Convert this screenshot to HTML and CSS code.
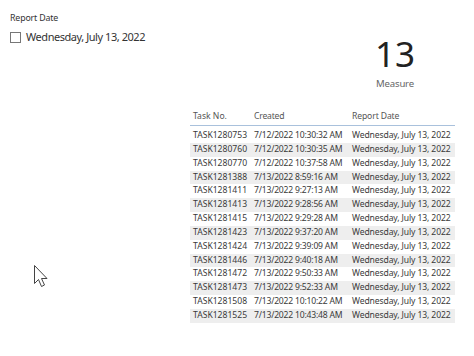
FILE: index.html
```html
<!DOCTYPE html>
<html>
<head>
<meta charset="utf-8">
<link rel="stylesheet" href="styles.css">
</head>
<body>
<div class="page">
  <div class="slicer">
    <div class="slicer-title">Report Date</div>
    <div class="slicer-item"><span class="checkbox"></span><span class="slicer-text">Wednesday, July 13, 2022</span></div>
  </div>
  <div class="right">
    <div class="card">
      <div class="card-value">13</div>
      <div class="card-label">Measure</div>
    </div>
    <div class="table">
      <div class="row head"><span class="c1">Task No.</span><span class="c2">Created</span><span class="c3">Report Date</span></div>
      <div class="body">
        <div class="row"><span class="c1">TASK1280753</span><span class="c2">7/12/2022 10:30:32 AM</span><span class="c3">Wednesday, July 13, 2022</span></div>
        <div class="row alt"><span class="c1">TASK1280760</span><span class="c2">7/12/2022 10:30:35 AM</span><span class="c3">Wednesday, July 13, 2022</span></div>
        <div class="row"><span class="c1">TASK1280770</span><span class="c2">7/12/2022 10:37:58 AM</span><span class="c3">Wednesday, July 13, 2022</span></div>
        <div class="row alt"><span class="c1">TASK1281388</span><span class="c2">7/13/2022 8:59:16 AM</span><span class="c3">Wednesday, July 13, 2022</span></div>
        <div class="row"><span class="c1">TASK1281411</span><span class="c2">7/13/2022 9:27:13 AM</span><span class="c3">Wednesday, July 13, 2022</span></div>
        <div class="row alt"><span class="c1">TASK1281413</span><span class="c2">7/13/2022 9:28:56 AM</span><span class="c3">Wednesday, July 13, 2022</span></div>
        <div class="row"><span class="c1">TASK1281415</span><span class="c2">7/13/2022 9:29:28 AM</span><span class="c3">Wednesday, July 13, 2022</span></div>
        <div class="row alt"><span class="c1">TASK1281423</span><span class="c2">7/13/2022 9:37:20 AM</span><span class="c3">Wednesday, July 13, 2022</span></div>
        <div class="row"><span class="c1">TASK1281424</span><span class="c2">7/13/2022 9:39:09 AM</span><span class="c3">Wednesday, July 13, 2022</span></div>
        <div class="row alt"><span class="c1">TASK1281446</span><span class="c2">7/13/2022 9:40:18 AM</span><span class="c3">Wednesday, July 13, 2022</span></div>
        <div class="row"><span class="c1">TASK1281472</span><span class="c2">7/13/2022 9:50:33 AM</span><span class="c3">Wednesday, July 13, 2022</span></div>
        <div class="row alt"><span class="c1">TASK1281473</span><span class="c2">7/13/2022 9:52:33 AM</span><span class="c3">Wednesday, July 13, 2022</span></div>
        <div class="row"><span class="c1">TASK1281508</span><span class="c2">7/13/2022 10:10:22 AM</span><span class="c3">Wednesday, July 13, 2022</span></div>
        <div class="row alt"><span class="c1">TASK1281525</span><span class="c2">7/13/2022 10:43:48 AM</span><span class="c3">Wednesday, July 13, 2022</span></div>
      </div>
    </div>
  </div>
</div>
<svg class="cursor" width="17" height="26" viewBox="0 0 17 26">
  <path d="M1.5 1.5 L1.5 19.5 L5.5 15.5 L8.5 22.5 L11.5 21 L8.5 14.5 L14 14.5 Z" fill="#fff" stroke="#444" stroke-width="1" stroke-linejoin="miter"/>
</svg>
</body>
</html>
```

FILE: styles.css
```css
html, body {
  margin: 0;
  padding: 0;
  background: #fff;
}
body {
  font-family: "Noto Sans", "Open Sans", sans-serif;
  color: #333;
  width: 474px;
  height: 356px;
  overflow: hidden;
  position: relative;
}
.page {
  display: flex;
  align-items: flex-start;
}
.slicer {
  width: 180px;
  padding: 12px 0 0 10px;
  box-sizing: border-box;
}
.slicer-title {
  font-size: 8.8px;
  line-height: 12px;
  letter-spacing: -0.15px;
  color: #333;
}
.slicer-item {
  display: flex;
  align-items: center;
  margin-top: 6px;
  gap: 5px;
}
.checkbox {
  width: 9px;
  height: 9px;
  border: 1px solid #777;
  display: inline-block;
}
.slicer-text {
  font-size: 11px;
  line-height: 14px;
  letter-spacing: -0.45px;
  color: #333;
}
.right {
  margin-left: 10px;
  width: 265px;
  display: flex;
  flex-direction: column;
}
.card {
  align-self: flex-end;
  width: 120px;
  margin-top: 36px;
  text-align: center;
}
.card-value {
  font-size: 35px;
  line-height: 36px;
  color: #222;
}
.card-label {
  font-size: 9.6px;
  line-height: 14px;
  letter-spacing: -0.2px;
  color: #666;
  margin-top: 5px;
}
.table {
  margin-top: 16px;
  font-size: 8.6px;
  color: #3a3a3a;
}
.row {
  display: flex;
  height: 13.85px;
  line-height: 13.85px;
  white-space: nowrap;
}
.row.head {
  height: 18px;
  line-height: 18px;
  color: #555;
  border-bottom: 1px solid #a9c1dc;
}
.body {
  margin-top: 3px;
}
.row.alt {
  background: #eeeeee;
}
.c1 {
  width: 61px;
  padding-left: 3px;
}
.c2 {
  width: 98px;
  letter-spacing: -0.2px;
}
.c3 {
  flex: 1;
  letter-spacing: -0.12px;
}
.cursor {
  position: absolute;
  left: 33px;
  top: 264px;
}
```
